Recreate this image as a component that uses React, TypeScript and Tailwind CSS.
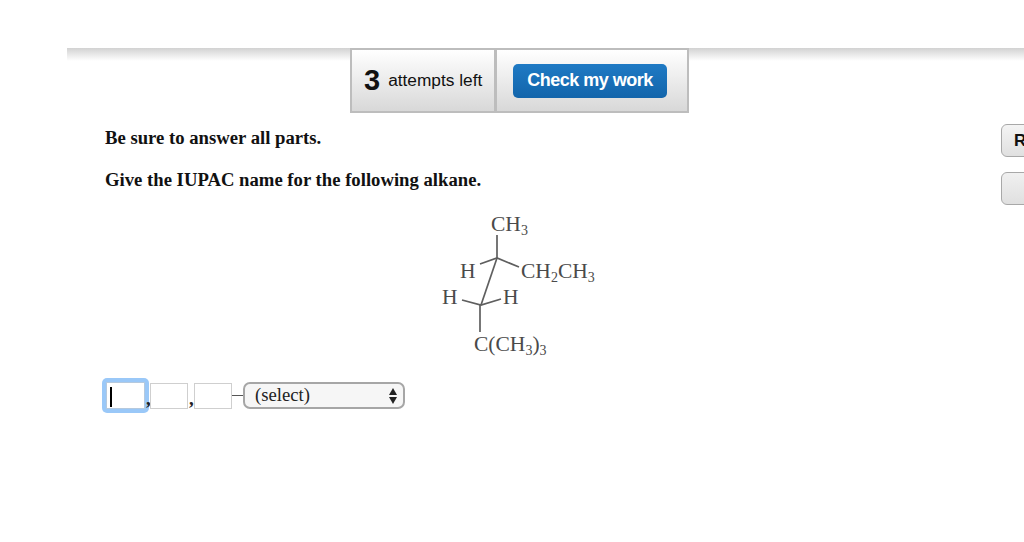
const serif = "font-['Liberation_Serif','Times_New_Roman',serif]";

function Sub({ n }: { n: string }) {
  return <sub className="text-[14px] align-baseline">{n}</sub>;
}

function Formula() {
  return (
    <div className={`relative w-[180px] h-[160px] text-[#4a4a4a] text-[21.5px] leading-none ${serif}`}>
      <svg className="absolute inset-0" width="180" height="160" fill="none" stroke="#5f5f5f" strokeWidth="1.7">
        <path d="M67 30V53" />
        <path d="M50 59L67 53L89 62" />
        <path d="M67 53L51 100" />
        <path d="M32 95L51 100L71 94" />
        <path d="M50 100V127" />
      </svg>
      <span className="absolute left-[61px] top-[9px]">CH<Sub n="3" /></span>
      <span className="absolute left-[30px] top-[56px]">H</span>
      <span className="absolute left-[91px] top-[56px]">CH<Sub n="2" />CH<Sub n="3" /></span>
      <span className="absolute left-[12px] top-[82px]">H</span>
      <span className="absolute left-[73px] top-[82px]">H</span>
      <span className="absolute left-[44px] top-[129px]">C(CH<Sub n="3" />)<Sub n="3" /></span>
    </div>
  );
}

function Answer() {
  return (
    <div className={`flex items-center h-[35px] ml-[102px] mt-[13px] text-[#222] ${serif}`}>
      <div className="w-[47px] h-[35px] rounded-[5px] bg-[#9ac8f8] p-[4px]">
        <div className="h-full bg-white border border-[#b5c9de] pl-[3px] pt-[4px]">
          <div className="w-[2px] h-[20px] bg-black" />
        </div>
      </div>
      <span className="w-[2px] text-[19px] font-bold leading-none -ml-[3px] mt-[5px]">,</span>
      <div className="w-[38px] h-[26px] ml-[2px] bg-white border border-[#cfcfcf]" />
      <span className="w-[6px] text-[19px] font-bold leading-none pl-[1px] mt-[5px]">,</span>
      <div className="w-[38px] h-[26px] bg-white border border-[#cfcfcf]" />
      <div className="w-[11px] h-[1.5px] bg-[#555]" />
      <div className="flex items-center justify-between w-[162px] h-[27px] rounded-[7px] border-2 border-[#a6a6a6] bg-[#f6f6f6] pl-[10px] pr-[6px] text-[18.7px]">
        <span>(select)</span>
        <span className="flex flex-col gap-[2px]">
          <span className="w-0 h-0 border-x-[4.5px] border-x-transparent border-b-[7px] border-b-[#222]" />
          <span className="w-0 h-0 border-x-[4.5px] border-x-transparent border-t-[7px] border-t-[#222]" />
        </span>
      </div>
    </div>
  );
}

export default function App() {
  return (
    <div className="w-[1024px] h-[542px] overflow-hidden bg-white pt-[48px] font-['Liberation_Sans',Arial,sans-serif]">
      <header className="ml-[67px] h-[65px] pl-[283px] bg-[linear-gradient(#d2d2d2,#ffffff)] bg-no-repeat bg-[length:100%_13px]">
        <div className="flex w-[339px] h-[65px] border-2 border-[#bdbdbd] bg-[linear-gradient(#ffffff,#d8d8d8)]">
          <div className="flex items-center w-[145px] pl-[12px] border-r-[3px] border-[#bdbdbd] text-[#111]">
            <span className="text-[29px] font-bold leading-none">3</span>
            <span className="ml-[8px] text-[17.3px]">attempts left</span>
          </div>
          <div className="flex-1 flex items-center pl-[16px]">
            <button className="w-[154px] h-[34px] rounded-[5px] bg-[linear-gradient(#1f7ac4,#1265ab)] text-white text-[18px] font-bold tracking-[-0.5px]">
              Check my work
            </button>
          </div>
        </div>
      </header>

      <main className="flex">
        <div className="w-[1001px]">
          <p className={`ml-[105px] mt-[15px] text-[18.7px] font-bold leading-[20px] text-[#111] ${serif}`}>Be sure to answer all parts.</p>
          <p className={`ml-[105px] mt-[22px] text-[18.7px] font-bold leading-[20px] text-[#111] ${serif}`}>Give the IUPAC name for the following alkane.</p>
          <div className="ml-[430px] mt-[15px]">
            <Formula />
          </div>
          <Answer />
        </div>
        <aside className="w-[23px] overflow-hidden pt-[11px] flex flex-col gap-[15px]">
          <div className="w-[60px] h-[33px] rounded-[6px] border border-[#a8a8a8] bg-[linear-gradient(#f4f4f4,#e0e0e0)] pl-[12px] text-[17px] font-bold leading-[31px] text-[#111]">R</div>
          <div className="w-[60px] h-[33px] rounded-[6px] border border-[#a8a8a8] bg-[linear-gradient(#f0f0f0,#e0e0e0)]" />
        </aside>
      </main>
    </div>
  );
}
